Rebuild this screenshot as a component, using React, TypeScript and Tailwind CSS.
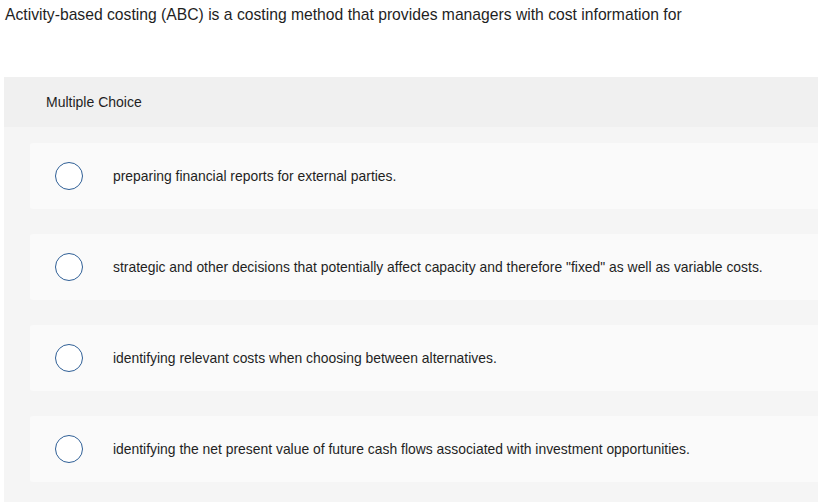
const options = [
  "preparing financial reports for external parties.",
  "strategic and other decisions that potentially affect capacity and therefore \"fixed\" as well as variable costs.",
  "identifying relevant costs when choosing between alternatives.",
  "identifying the net present value of future cash flows associated with investment opportunities.",
]

export default function App() {
  return (
    <div className="w-[818px] h-[502px] bg-white overflow-hidden font-['Liberation_Sans',Arial,sans-serif] text-[#1f1f1f]">
      {/* Question */}
      <p className="pl-[5px] pt-[6px] h-[77px] text-[15.7px] leading-[18px]">
        Activity-based costing (ABC) is a costing method that provides managers with cost information for
      </p>

      {/* Panel */}
      <div className="ml-[4px] bg-[#f5f5f5] h-[425px]">
        <div className="h-[50px] bg-[#f0f0f0] flex items-center pl-[42px] text-[14px]">
          Multiple Choice
        </div>
        <div className="flex flex-col gap-[25px] pt-[16px] pl-[26px]">
          {options.map((text) => (
            <div key={text} className="h-[66px] bg-[#fafafa] rounded-l-[3px] flex items-center">
              <span className="ml-[25px] w-[28px] h-[28px] rounded-full border-[1.5px] border-[#2f5f96] bg-white shrink-0" />
              <span className="ml-[30px] text-[13.9px] leading-[16px]">{text}</span>
            </div>
          ))}
        </div>
      </div>
    </div>
  )
}
